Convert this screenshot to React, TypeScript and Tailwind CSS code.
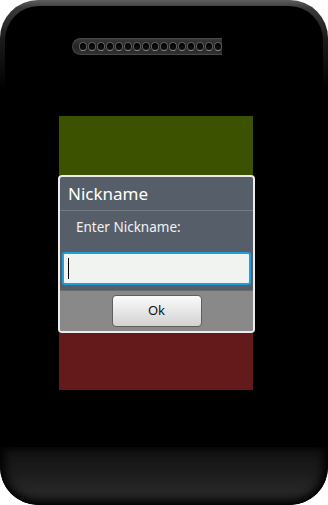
import React from 'react';

const holes = Array.from({ length: 18 });

const Speaker: React.FC = () => (
  <div className="ml-[67px] mt-[32px] flex h-[17px] w-[150px] items-center overflow-hidden rounded-l-full border-y border-l border-[#474747] bg-gradient-to-b from-[#383838] via-[#242424] to-[#303030] pl-[6px]">
    <div className="flex gap-[1px]">
      {holes.map((_, i) => (
        <span
          key={i}
          className="block h-[9px] w-[8px] shrink-0 rounded-full border border-[#5c5c5c] border-b-[#8a8a8a] bg-[#0e0e0e] shadow-[inset_0_2px_2px_#000]"
        />
      ))}
    </div>
  </div>
);

const NicknameDialog: React.FC = () => (
  <div className="ml-[53px] flex h-[158px] w-[197px] flex-col overflow-hidden rounded-[4px] border-2 border-[#ececec] bg-[#565e69]">
    <div className="flex h-[34px] items-center border-b border-[#737a83] pl-[8px] text-[17px] text-white">
      Nickname
    </div>
    <div className="flex h-[32px] items-center pl-[16px] text-[13.5px] text-[#f2f2f2]">
      Enter Nickname:
    </div>
    <div className="mx-[2px] mt-[9px] flex h-[33px] items-center rounded-[3px] border-2 border-[#1e9fdc] bg-[#f1f3f1] pl-[4px]">
      <span className="block h-[21px] w-[1px] bg-black" />
    </div>
    <div className="mt-[5px] flex flex-1 items-center justify-center border-t border-[#6a6a6a] bg-[#898989]">
      <button className="flex h-[32px] w-[90px] items-center justify-center rounded-[4px] border border-[#5e5e5e] bg-gradient-to-b from-[#fbfbfb] to-[#d2d2d2] text-[13px] text-[#111]">
        Ok
      </button>
    </div>
  </div>
);

export default function App() {
  return (
    <div
      className="h-[505px] w-[328px] bg-white"
      style={{ fontFamily: '"Noto Sans", "Open Sans", sans-serif' }}
    >
      <div className="flex h-full flex-col overflow-hidden rounded-[38px] bg-[linear-gradient(to_bottom,#5e5e5e_0px,#3a3a3a_8px,#1a1a1a_40px,#000_90px)] px-[5px] pt-[6px]">
        <div className="flex flex-1 flex-col rounded-t-[34px] bg-black">
          <Speaker />
          <div className="ml-[54px] mt-[61px] h-[59px] w-[194px] bg-[#3c5200]" />
          <NicknameDialog />
          <div className="ml-[54px] h-[57px] w-[194px] bg-[#641a1a]" />
        </div>
        <div className="-mx-[5px] h-[58px] rounded-b-[38px] bg-[linear-gradient(to_bottom,#111_0%,#1c1c1c_45%,#262626_75%,#1e1e1e_100%)] shadow-[inset_6px_0_8px_rgba(0,0,0,0.7),inset_-6px_0_8px_rgba(0,0,0,0.7),inset_0_-4px_6px_rgba(0,0,0,0.6)]" />
      </div>
    </div>
  );
}
